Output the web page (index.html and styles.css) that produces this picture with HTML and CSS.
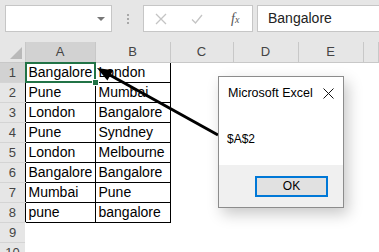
FILE: index.html
```html
<!DOCTYPE html>
<html lang="en">
  <head>
    <meta charset="UTF-8" />
    <meta name="viewport" content="width=device-width, initial-scale=1.0" />
    <title>Excel - Microsoft Excel</title>
    <link rel="stylesheet" href="styles.css">
  </head>
  <body>
    <div class="toolbar">
      <div class="namebox"><span class="caret"></span></div>
      <div class="grip"><i></i><i></i><i></i></div>
      <div class="tools">
        <svg class="ic" width="12" height="12" viewBox="0 0 12 12"><path d="M1 1 L11 11 M11 1 L1 11" stroke="#c4c4c4" stroke-width="1.3" fill="none"/></svg>
        <svg class="ic" width="12" height="12" viewBox="0 0 12 12"><path d="M1 6.5 L4.5 10 L11 2" stroke="#c4c4c4" stroke-width="1.3" fill="none"/></svg>
        <span class="fx">f<sub>x</sub></span>
      </div>
      <div class="formula">Bangalore</div>
    </div>

    <table class="sheet">
      <colgroup>
        <col style="width:25px"><col style="width:70px"><col style="width:75px">
        <col style="width:63px"><col style="width:65px"><col style="width:65px"><col>
      </colgroup>
      <thead>
        <tr>
          <th class="corner"><span class="tri"></span></th>
          <th class="col sel">A</th>
          <th class="col">B</th>
          <th class="col">C</th>
          <th class="col">D</th>
          <th class="col">E</th>
          <th class="col"></th>
        </tr>
      </thead>
      <tbody>
        <tr><th class="row sel">1</th><td class="d active">Bangalore</td><td class="d">London</td><td></td><td></td><td></td><td></td></tr>
        <tr><th class="row">2</th><td class="d">Pune</td><td class="d">Mumbai</td><td></td><td></td><td></td><td></td></tr>
        <tr><th class="row">3</th><td class="d">London</td><td class="d">Bangalore</td><td></td><td></td><td></td><td></td></tr>
        <tr><th class="row">4</th><td class="d">Pune</td><td class="d">Syndney</td><td></td><td></td><td></td><td></td></tr>
        <tr><th class="row">5</th><td class="d">London</td><td class="d">Melbourne</td><td></td><td></td><td></td><td></td></tr>
        <tr><th class="row">6</th><td class="d">Bangalore</td><td class="d">Bangalore</td><td></td><td></td><td></td><td></td></tr>
        <tr><th class="row">7</th><td class="d">Mumbai</td><td class="d">Pune</td><td></td><td></td><td></td><td></td></tr>
        <tr><th class="row">8</th><td class="d">pune</td><td class="d">bangalore</td><td></td><td></td><td></td><td></td></tr>
        <tr><th class="row">9</th><td></td><td></td><td></td><td></td><td></td><td></td></tr>
        <tr><th class="row">10</th><td></td><td></td><td></td><td></td><td></td><td></td></tr>
      </tbody>
    </table>

    <svg class="arrow" width="379" height="252" viewBox="0 0 379 252">
      <line x1="218" y1="135" x2="108" y2="74" stroke="#000" stroke-width="3"/>
      <polygon points="97,68 107.4,80.6 113.2,70.2" fill="#000"/>
    </svg>

    <div class="dialog">
      <div class="dlg-title">
        <span>Microsoft Excel</span>
        <svg width="11" height="11" viewBox="0 0 11 11"><path d="M0.5 0.5 L10.5 10.5 M10.5 0.5 L0.5 10.5" stroke="#111" stroke-width="1" fill="none"/></svg>
      </div>
      <div class="dlg-body">$A$2</div>
      <div class="dlg-foot"><button class="ok">OK</button></div>
    </div>
  </body>
</html>
```

FILE: styles.css
```css
body {
  margin: 0;
  width: 379px;
  height: 252px;
  overflow: hidden;
  background-color: #ffffff;
  font-family: "Liberation Sans", Arial, sans-serif;
  position: relative;
}

.toolbar {
  background-color: #e6e6e6;
  height: 42px;
  display: flex;
  align-items: flex-start;
  padding-top: 5px;
  box-sizing: border-box;
}

.namebox {
  margin-left: 5px;
  width: 107px;
  height: 27px;
  box-sizing: border-box;
  background-color: #fff;
  border: 1px solid #c6c6c6;
  display: flex;
  justify-content: flex-end;
  align-items: center;
  padding-right: 6px;
}

.caret {
  width: 0;
  height: 0;
  border-left: 4px solid transparent;
  border-right: 4px solid transparent;
  border-top: 4px solid #777;
}

.grip {
  width: 31px;
  height: 27px;
  display: flex;
  flex-direction: column;
  justify-content: center;
  align-items: center;
  gap: 2px;
}

.grip i {
  width: 2px;
  height: 2px;
  background-color: #a8a8a8;
}

.tools {
  width: 110px;
  height: 27px;
  box-sizing: border-box;
  background-color: #fff;
  border: 1px solid #c6c6c6;
  display: flex;
  align-items: center;
  padding-left: 11px;
  gap: 24px;
}

.fx {
  font-family: "Liberation Serif", serif;
  font-style: italic;
  font-size: 14px;
  color: #555;
  margin-left: 4px;
}

.fx sub {
  font-size: 10px;
  vertical-align: 0;
}

.formula {
  margin-left: 4px;
  flex: 1;
  height: 27px;
  box-sizing: border-box;
  background-color: #fff;
  border: 1px solid #c6c6c6;
  border-right: none;
  padding-left: 10px;
  font-size: 14px;
  line-height: 25px;
  color: #222;
}

.sheet {
  border-collapse: collapse;
  table-layout: fixed;
  width: 379px;
}

.sheet tr {
  height: 20px;
}

.sheet th {
  background-color: #e6e6e6;
  font-weight: normal;
  font-size: 13px;
  color: #444;
  padding: 0;
}

.sheet th.col {
  border-right: 1px solid #c8c8c8;
  border-bottom: 1px solid #c8c8c8;
  text-align: center;
}

.sheet th.row {
  border-bottom: 1px solid #d4d4d4;
  text-align: center;
}

.sheet th.sel {
  background-color: #d2d2d2;
}

.corner {
  border-right: 1px solid #c8c8c8;
  border-bottom: 1px solid #c8c8c8;
  position: relative;
}

.tri {
  position: absolute;
  right: 3px;
  bottom: 3px;
  width: 0;
  height: 0;
  border-left: 12px solid transparent;
  border-bottom: 12px solid #b9b9b9;
}

.sheet td {
  padding: 0 0 0 3px;
  font-size: 14px;
  color: #000;
  white-space: nowrap;
  overflow: hidden;
}

.sheet td.d {
  border: 1px solid #000;
}

.sheet td.active {
  position: relative;
  overflow: visible;
}

.sheet td.active::before {
  content: "";
  position: absolute;
  left: -1px;
  top: -1px;
  right: -1px;
  bottom: -1px;
  border: 2px solid #217346;
}

.sheet td.active::after {
  content: "";
  position: absolute;
  right: -4px;
  bottom: -4px;
  width: 5px;
  height: 5px;
  background-color: #217346;
  border: 1px solid #fff;
}

.arrow {
  position: absolute;
  left: 0;
  top: 0;
  pointer-events: none;
}

.dialog {
  position: absolute;
  left: 218px;
  top: 76px;
  width: 126px;
  height: 132px;
  box-sizing: border-box;
  border: 1px solid #8c8c8c;
  background-color: #fff;
  box-shadow: 4px 6px 14px rgba(0, 0, 0, 0.22);
  display: flex;
  flex-direction: column;
  font-size: 12px;
  color: #000;
}

.dlg-title {
  height: 32px;
  display: flex;
  align-items: center;
  justify-content: space-between;
  padding: 0 9px 0 9px;
  font-size: 12.5px;
}

.dlg-body {
  flex: 1;
  padding-left: 8px;
  padding-top: 23px;
  font-size: 12px;
}

.dlg-foot {
  height: 42px;
  background-color: #f0f0f0;
  display: flex;
  justify-content: flex-end;
  align-items: center;
  padding-right: 15px;
}

.ok {
  width: 73px;
  height: 21px;
  border: 2px solid #0078d7;
  background-color: #e1e1e1;
  font-family: "Liberation Sans", Arial, sans-serif;
  font-size: 12px;
  color: #000;
  padding: 0;
}
```
